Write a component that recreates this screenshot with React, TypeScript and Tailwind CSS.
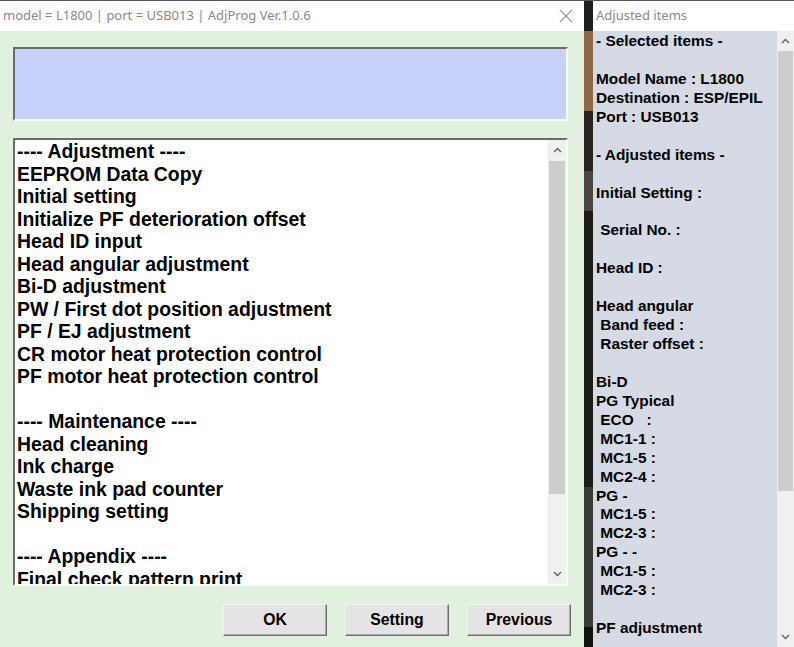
import React from 'react'

const LIST_ITEMS = [
  '---- Adjustment ----',
  'EEPROM Data Copy',
  'Initial setting',
  'Initialize PF deterioration offset',
  'Head ID input',
  'Head angular adjustment',
  'Bi-D adjustment',
  'PW / First dot position adjustment',
  'PF / EJ adjustment',
  'CR motor heat protection control',
  'PF motor heat protection control',
  '',
  '---- Maintenance ----',
  'Head cleaning',
  'Ink charge',
  'Waste ink pad counter',
  'Shipping setting',
  '',
  '---- Appendix ----',
  'Final check pattern print',
]

const ADJUSTED = [
  '- Selected items -',
  '',
  'Model Name : L1800',
  'Destination : ESP/EPIL',
  'Port : USB013',
  '',
  '- Adjusted items -',
  '',
  'Initial Setting :',
  '',
  ' Serial No. :',
  '',
  'Head ID :',
  '',
  'Head angular',
  ' Band feed :',
  ' Raster offset :',
  '',
  'Bi-D',
  'PG Typical',
  ' ECO   :',
  ' MC1-1 :',
  ' MC1-5 :',
  ' MC2-4 :',
  'PG -',
  ' MC1-5 :',
  ' MC2-3 :',
  'PG - -',
  ' MC1-5 :',
  ' MC2-3 :',
  '',
  'PF adjustment',
]

function Chevron({ up }: { up?: boolean }) {
  return (
    <svg width="9" height="6" viewBox="0 0 9 6" className="text-[#606060]">
      <path d={up ? 'M1 5 L4.5 1.5 L8 5' : 'M1 1 L4.5 4.5 L8 1'} fill="none" stroke="currentColor" strokeWidth="1.4" />
    </svg>
  )
}

function Scrollbar({ thumbTop, thumbBottom }: { thumbTop: number; thumbBottom: number }) {
  return (
    <div className="flex h-full w-full flex-col bg-[#f0f0f0]">
      <div className="flex h-[20px] shrink-0 items-center justify-center">
        <Chevron up />
      </div>
      <div className="flex flex-1 flex-col">
        <div style={{ height: thumbTop }} />
        <div className="mx-[1px] bg-[#cdcdcd]" style={{ height: thumbBottom - thumbTop }} />
        <div className="flex-1" />
      </div>
      <div className="flex h-[20px] shrink-0 items-center justify-center">
        <Chevron />
      </div>
    </div>
  )
}

function WinButton({ label }: { label: string }) {
  return (
    <button className="h-[32px] w-[104px] border border-t-[#f4f4f4] border-l-[#f4f4f4] border-b-[#6f6f6f] border-r-[#6f6f6f] bg-[#e4e4e4] text-[15.8px] font-bold text-black shadow-[inset_-1px_-1px_0_#a8a8a8]">
      {label}
    </button>
  )
}

export default function App() {
  return (
    <div
      className="flex h-[647px] w-[794px] overflow-hidden border-t border-[#555] bg-white"
      style={{ fontFamily: '"Liberation Sans", Arial, sans-serif' }}
    >
      {/* main AdjProg window */}
      <div className="flex w-[584px] shrink-0 flex-col">
        <div className="flex h-[30px] shrink-0 items-center justify-between bg-white pl-[3px] pr-[10px]">
          <span className="text-[13px] text-[#8a8a8a]" style={{ fontFamily: '"Noto Sans", "Open Sans", sans-serif' }}>
            model = L1800 | port = USB013 | AdjProg Ver.1.0.6
          </span>
          <svg width="14" height="14" viewBox="0 0 14 14" className="mr-[1px]">
            <path d="M1 1 L13 13 M13 1 L1 13" stroke="#9a9a9a" strokeWidth="1.2" />
          </svg>
        </div>

        <div className="flex flex-1 flex-col bg-[#e2f0e0] pl-[13px] pr-[16px] pt-[16px]">
          <div className="h-[74px] border-2 border-t-[#6b6b6b] border-l-[#6b6b6b] border-b-[#fafafa] border-r-[#fafafa] bg-[#c7d1fa]" />

          <div className="mt-[17px] flex h-[448px] border-2 border-t-[#6b6b6b] border-l-[#6b6b6b] border-b-[#fafafa] border-r-[#fafafa] bg-white">
            <div className="flex-1 overflow-hidden pl-[2px]">
              {LIST_ITEMS.map((t, i) => (
                <div key={i} className="h-[22.5px] whitespace-pre text-[19.4px] font-bold leading-[22.5px] text-black">
                  {t}
                </div>
              ))}
            </div>
            <div className="w-[18px] shrink-0">
              <Scrollbar thumbTop={1} thumbBottom={334} />
            </div>
          </div>

          <div className="-mr-[3px] mt-[18px] flex justify-end gap-[18px]">
            <WinButton label="OK" />
            <WinButton label="Setting" />
            <WinButton label="Previous" />
          </div>
        </div>
      </div>

      {/* desktop wallpaper strip */}
      <div className="flex w-[9px] shrink-0 flex-col">
        <div className="h-[30px] bg-[#1e1e1e]" />
        <div className="h-[80px] bg-[#8a6a48]" />
        <div className="h-[60px] bg-[#262321]" />
        <div className="h-[40px] bg-[#4a4540]" />
        <div className="flex-1 bg-[#1c1c1c]" />
        <div className="h-[140px] bg-[#3a3a3a]" />
        <div className="h-[20px] bg-[#111]" />
      </div>

      {/* Adjusted items window */}
      <div className="flex flex-1 flex-col">
        <div className="flex h-[30px] shrink-0 items-center bg-white pl-[3px]">
          <span className="text-[13px] text-[#8a8a8a]" style={{ fontFamily: '"Noto Sans", "Open Sans", sans-serif' }}>
            Adjusted items
          </span>
        </div>
        <div className="flex flex-1">
          <div className="flex-1 overflow-hidden bg-[#d6dae4] pl-[3px] pt-[1px]">
            {ADJUSTED.map((t, i) => (
              <div key={i} className="h-[18.95px] whitespace-pre text-[15.4px] font-bold leading-[18.95px] text-black">
                {t}
              </div>
            ))}
          </div>
          <div className="w-[17px] shrink-0">
            <Scrollbar thumbTop={0} thumbBottom={440} />
          </div>
        </div>
      </div>
    </div>
  )
}
